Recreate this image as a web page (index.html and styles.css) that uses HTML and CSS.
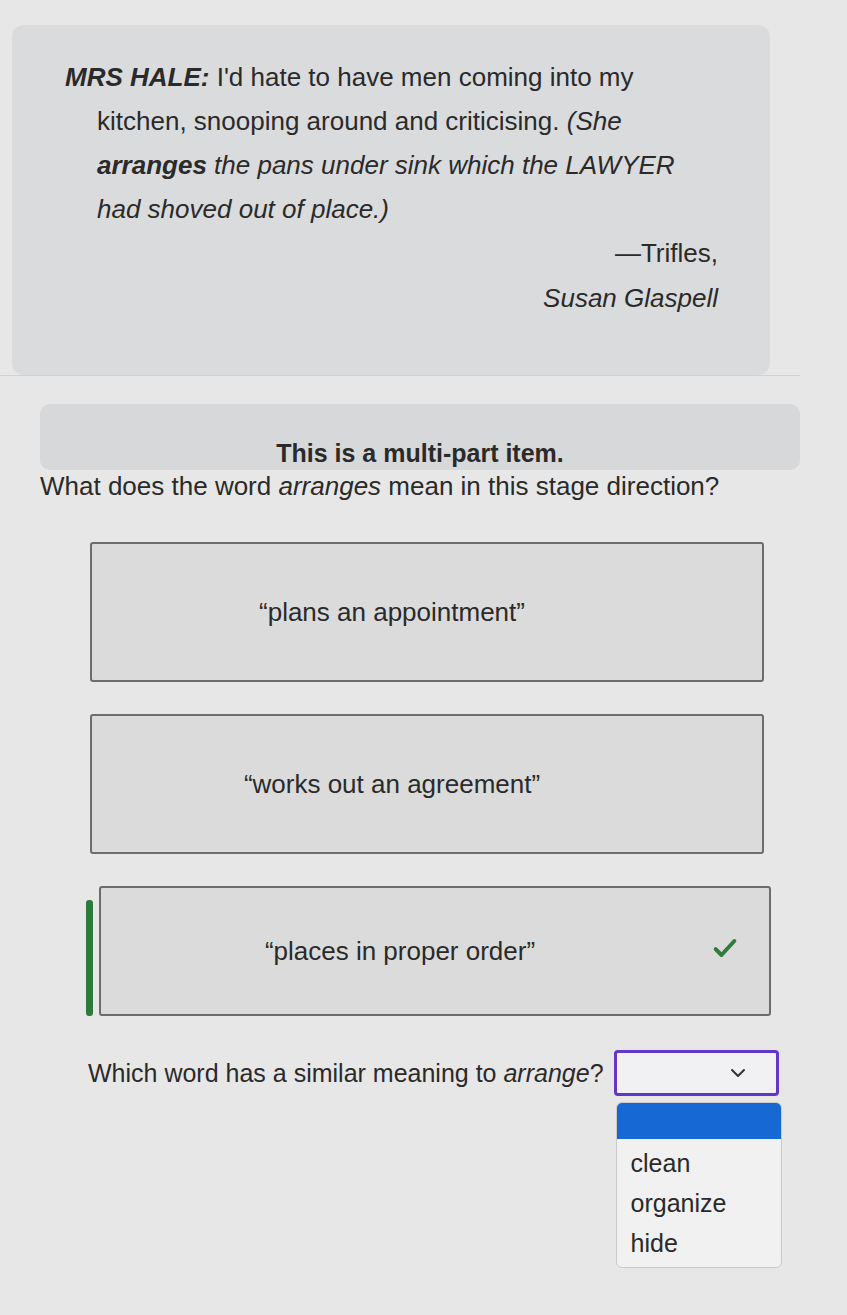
FILE: index.html
```html
<!DOCTYPE html>
<html lang="en">
<head>
<meta charset="utf-8">
<title>Trifles – multi-part item</title>
<link rel="stylesheet" href="styles.css">
</head>
<body>
<main class="page">
  <section class="passage">
    <p class="speech"><b><i>MRS HALE:</i></b> I'd hate to have men coming into my<br>kitchen, snooping around and criticising. <i>(She<br><b>arranges</b> the pans under sink which the LAWYER<br>had shoved out of place.)</i></p>
    <p class="source">—Trifles,</p>
    <p class="source"><i>Susan Glaspell</i></p>
  </section>

  <hr class="divider">

  <div class="banner">This is a multi-part item.</div>
  <p class="question">What does the word <i>arranges</i> mean in this stage direction?</p>

  <div class="options">
    <div class="option">“plans an appointment”</div>
    <div class="option">“works out an agreement”</div>
    <div class="option option-correct">
      <span class="mark"></span>
      <div class="option-box">“places in proper order”
        <svg class="check" viewBox="0 0 24 24" width="28" height="28" aria-hidden="true"><path d="M4 13l5 5L20 6" fill="none" stroke="#2f7d3a" stroke-width="3.4" stroke-linecap="round" stroke-linejoin="round"/></svg>
      </div>
    </div>
  </div>

  <div class="prompt-row">
    <span class="prompt">Which word has a similar meaning to <i>arrange</i>?</span>
    <div class="select-wrap">
      <div class="select">
        <svg class="chevron" viewBox="0 0 16 10" width="16" height="10" aria-hidden="true"><path d="M2 2l6 6 6-6" fill="none" stroke="#333" stroke-width="2" stroke-linecap="round" stroke-linejoin="round"/></svg>
      </div>
      <ul class="menu">
        <li class="menu-blank"></li>
        <li>clean</li>
        <li>organize</li>
        <li>hide</li>
      </ul>
    </div>
  </div>
</main>
</body>
</html>
```

FILE: styles.css
```css
* { box-sizing: border-box; }

body {
  margin: 0;
  background: #e7e7e8;
  font-family: "Liberation Sans", Arial, sans-serif;
  color: #2a2a2a;
}

.page {
  width: 847px;
  min-height: 1315px;
  padding: 25px 0 40px;
}

/* quoted passage card */
.passage {
  margin-left: 12px;
  width: 758px;
  height: 350px;
  background: #dadbdd;
  border-radius: 12px;
  padding: 30px 52px 0 85px;
}

.speech {
  margin: 0;
  font-size: 26px;
  line-height: 44px;
  text-indent: -32px;
  white-space: nowrap;
}

.source {
  margin: 0;
  font-size: 26px;
  line-height: 45px;
  text-align: right;
}

.divider {
  border: 0;
  border-top: 1px solid #d2d2d4;
  margin: 0;
  width: 800px;
}

.banner {
  margin: 28px 47px 0 40px;
  height: 66px;
  background: #d7d8da;
  border-radius: 10px;
  padding-top: 36px;
  text-align: center;
  font-weight: bold;
  font-size: 25px;
  line-height: 26px;
}

.question {
  margin: 0 0 0 40px;
  font-size: 26px;
  line-height: 32px;
}

/* answer choices */
.options {
  margin-top: 40px;
  display: flex;
  flex-direction: column;
  gap: 32px;
}

.option {
  margin-left: 90px;
  width: 674px;
  height: 140px;
  background: #dbdbdb;
  border: 2px solid #6c6c6c;
  border-radius: 3px;
  display: flex;
  align-items: center;
  justify-content: center;
  padding-right: 70px;
  font-size: 26px;
}

.option-correct {
  background: none;
  border: 0;
  padding-right: 0;
  margin-left: 86px;
  width: 685px;
  height: 130px;
  gap: 6px;
  align-items: stretch;
}

.mark {
  width: 7px;
  background: #2e7a3c;
  border-radius: 3px;
  margin-top: 14px;
}

.option-box {
  flex: 1;
  position: relative;
  background: #dbdbdb;
  border: 2px solid #6c6c6c;
  border-radius: 3px;
  display: flex;
  align-items: center;
  justify-content: center;
  padding-right: 70px;
}

.check {
  position: absolute;
  right: 30px;
  top: 50%;
  margin-top: -17px;
}

/* dropdown question */
.prompt-row {
  margin: 34px 0 0 88px;
  display: flex;
  align-items: flex-start;
  gap: 10px;
}

.prompt {
  font-size: 25px;
  line-height: 46px;
}

.select-wrap {
  width: 168px;
}

.select {
  height: 46px;
  width: 165px;
  background: #f1f1f3;
  border: 3px solid #6236c8;
  border-radius: 4px;
  display: flex;
  align-items: center;
  justify-content: flex-end;
  padding-right: 30px;
}

.menu {
  list-style: none;
  margin: 6px 0 0 2px;
  padding: 0 0 4px;
  background: #f1f1f1;
  border: 1px solid #c9c9c9;
  border-radius: 6px;
  overflow: hidden;
  font-size: 25px;
}

.menu li {
  padding-left: 14px;
  line-height: 40px;
}

.menu .menu-blank {
  height: 36px;
  background: #1668d4;
  margin-bottom: 4px;
}
```
